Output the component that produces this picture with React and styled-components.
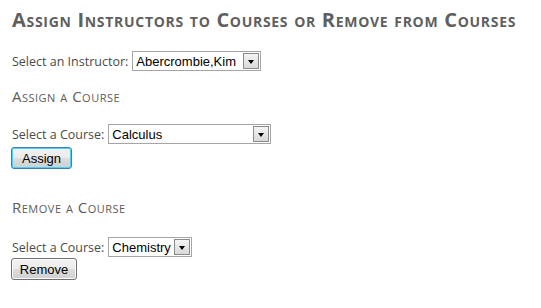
import React from "react";
import styled, { createGlobalStyle } from "styled-components";

const Global = createGlobalStyle`
  html, body { margin: 0; padding: 0; background: #fff; }
  body { font-family: "Open Sans", "DejaVu Sans", sans-serif; color: #555; }
`;

const Page = styled.div`
  padding: 7px 12px 0 12px;
`;

const Title = styled.h1`
  margin: 0;
  font-size: 20px;
  line-height: 26px;
  font-weight: 700;
  font-variant: small-caps;
  color: #5f5f5f;
  letter-spacing: 0.7px;
  white-space: nowrap;
`;

const SubTitle = styled.h2`
  margin: ${(p) => p.$top}px 0 0 0;
  font-size: 15px;
  line-height: 20px;
  font-weight: 400;
  font-variant: small-caps;
  letter-spacing: 0.5px;
  color: #5c5c5c;
`;

const Row = styled.div`
  display: flex;
  align-items: center;
  gap: 4px;
  margin-top: ${(p) => p.$top}px;
  height: 20px;
`;

const Label = styled.label`
  font-size: 12.5px;
  color: #4a4a4a;
`;

const SelectBox = styled.div`
  display: inline-flex;
  align-items: center;
  box-sizing: border-box;
  width: ${(p) => p.$w}px;
  height: 20px;
  border: 1px solid #a5a5a5;
  background: #fff;
  padding: 1px;
`;

const NativeSelect = styled.select`
  appearance: none;
  -webkit-appearance: none;
  border: none;
  outline: none;
  background: transparent;
  flex: 1;
  min-width: 0;
  height: 16px;
  padding: 0 0 0 2px;
  margin: 0;
  font-family: "Liberation Sans", Arial, sans-serif;
  font-size: 13px;
  color: #000;
`;

const Arrow = styled.span`
  box-sizing: border-box;
  width: 16px;
  height: 16px;
  border: 1px solid #8a8a8a;
  background: linear-gradient(#f4f4f4, #d9d9d9);
  display: flex;
  align-items: center;
  justify-content: center;
  &::after {
    content: "";
    border-left: 3.5px solid transparent;
    border-right: 3.5px solid transparent;
    border-top: 4px solid #000;
    margin-top: 1px;
  }
`;

const Button = styled.button`
  display: block;
  box-sizing: border-box;
  margin: ${(p) => p.$top}px 0 0 -1px;
  width: ${(p) => p.$w}px;
  height: 22px;
  padding: 0;
  font-family: "Liberation Sans", Arial, sans-serif;
  font-size: 13px;
  color: #000;
  border-radius: 3px;
  border: 1px solid ${(p) => (p.$focus ? "#3c7fb1" : "#707070")};
  box-shadow: inset 0 0 0 1px ${(p) => (p.$focus ? "#48d0f6" : "#fbfbfb")};
  background: linear-gradient(#f2f2f2 0%, #ebebeb 50%, #dddddd 50%, #cfcfcf 100%);
`;

function Select({ width, value, options }) {
  return (
    <SelectBox $w={width}>
      <NativeSelect defaultValue={value}>
        {options.map((o) => (
          <option key={o}>{o}</option>
        ))}
      </NativeSelect>
      <Arrow />
    </SelectBox>
  );
}

export default function App() {
  return (
    <>
      <Global />
      <Page>
        <Title>Assign Instructors to Courses or Remove from Courses</Title>
        <Row $top={18}>
          <Label>Select an Instructor:</Label>
          <Select width={129} value="Abercrombie,Kim" options={["Abercrombie,Kim", "Fakhouri,Fadi", "Harui,Roger"]} />
        </Row>
        <SubTitle $top={15}>Assign a Course</SubTitle>
        <Row $top={18}>
          <Label>Select a Course:</Label>
          <Select width={163} value="Calculus" options={["Calculus", "Chemistry", "Literature"]} />
        </Row>
        <Button $top={3} $w={61} $focus>Assign</Button>
        <SubTitle $top={28}>Remove a Course</SubTitle>
        <Row $top={20}>
          <Label>Select a Course:</Label>
          <Select width={84} value="Chemistry" options={["Chemistry"]} />
        </Row>
        <Button $top={1} $w={66}>Remove</Button>
      </Page>
    </>
  );
}
